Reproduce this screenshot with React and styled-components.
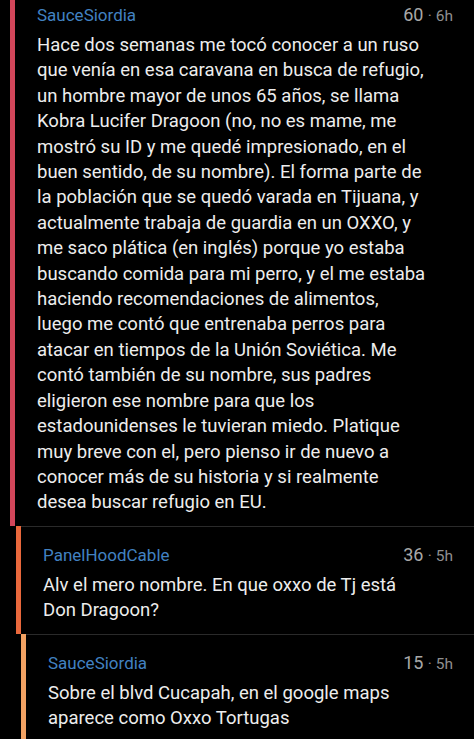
import React from "react";
import styled, { createGlobalStyle } from "styled-components";

const GlobalStyle = createGlobalStyle`
  html, body {
    margin: 0;
    padding: 0;
    background: #000;
    overflow: hidden;
  }
  body {
    font-family: Roboto, "Noto Sans", "Liberation Sans", sans-serif;
    -webkit-font-smoothing: antialiased;
  }
`;

const Thread = styled.div`
  display: flex;
  flex-direction: column;
  width: 474px;
  background: #000;
`;

const Row = styled.div`
  display: flex;
  align-items: stretch;
  padding-left: ${(p) => p.$indent}px;
`;

const Bar = styled.div`
  width: 5px;
  flex-shrink: 0;
  background: ${(p) => p.$color};
`;

const Body = styled.div`
  flex: 1;
  min-width: 0;
  padding: ${(p) => (p.$first ? "4px" : "17px")} 21px 10px 22px;
  border-top: ${(p) => (p.$first ? "none" : "1px solid #2a2a2a")};
  display: flex;
  flex-direction: column;
  gap: 7px;
`;

const Header = styled.div`
  display: flex;
  justify-content: space-between;
  align-items: baseline;
  height: 22px;
  line-height: 22px;
`;

const Author = styled.span`
  font-size: 17px;
  color: #4282c2;
`;

const Meta = styled.span`
  color: #a8a8a8;
  font-size: 18px;
`;

const Age = styled.span`
  font-size: 15.5px;
  color: #8f8f8f;
`;

const Text = styled.div`
  color: #ededed;
  font-size: 18.5px;
  line-height: 25.4px;
`;

const Line = styled.div`
  white-space: nowrap;
`;

const comments = [
  {
    author: "SauceSiordia",
    score: "60",
    age: "6h",
    indent: 10,
    color: "#d2465a",
    lines: [
      "Hace dos semanas me tocó conocer a un ruso",
      "que venía en esa caravana en busca de refugio,",
      "un hombre mayor de unos 65 años, se llama",
      "Kobra Lucifer Dragoon (no, no es mame, me",
      "mostró su ID y me quedé impresionado, en el",
      "buen sentido, de su nombre). El forma parte de",
      "la población que se quedó varada en Tijuana, y",
      "actualmente trabaja de guardia en un OXXO, y",
      "me saco plática (en inglés) porque yo estaba",
      "buscando comida para mi perro, y el me estaba",
      "haciendo recomendaciones de alimentos,",
      "luego me contó que entrenaba perros para",
      "atacar en tiempos de la Unión Soviética. Me",
      "contó también de su nombre, sus padres",
      "eligieron ese nombre para que los",
      "estadounidenses le tuvieran miedo. Platique",
      "muy breve con el, pero pienso ir de nuevo a",
      "conocer más de su historia y si realmente",
      "desea buscar refugio en EU.",
    ],
  },
  {
    author: "PanelHoodCable",
    score: "36",
    age: "5h",
    indent: 16,
    color: "#e9683c",
    lines: ["Alv el mero nombre. En que oxxo de Tj está", "Don Dragoon?"],
  },
  {
    author: "SauceSiordia",
    score: "15",
    age: "5h",
    indent: 21,
    color: "#f2a263",
    lines: [
      "Sobre el blvd Cucapah, en el google maps",
      "aparece como Oxxo Tortugas",
    ],
  },
];

function Comment({ c, first }) {
  return (
    <Row $indent={c.indent}>
      <Bar $color={c.color} />
      <Body $first={first}>
        <Header>
          <Author>{c.author}</Author>
          <Meta>
            {c.score} <Age>· {c.age}</Age>
          </Meta>
        </Header>
        <Text>
          {c.lines.map((l, i) => (
            <Line key={i}>{l}</Line>
          ))}
        </Text>
      </Body>
    </Row>
  );
}

export default function App() {
  return (
    <>
      <GlobalStyle />
      <Thread>
        {comments.map((c, i) => (
          <Comment key={i} c={c} first={i === 0} />
        ))}
      </Thread>
    </>
  );
}
